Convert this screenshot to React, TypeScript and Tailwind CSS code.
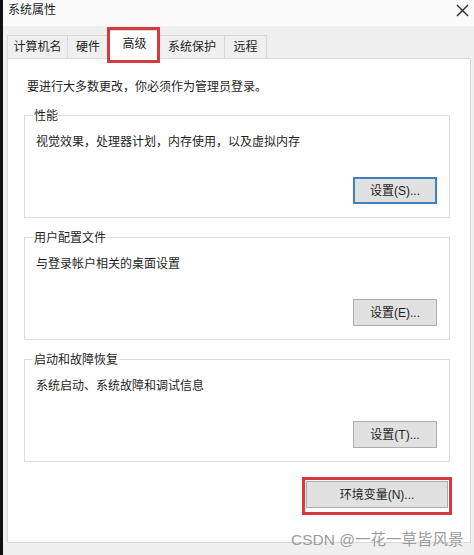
import React from 'react';

const tabs = [
  { label: '计算机名', w: 'w-[61px]' },
  { label: '硬件', w: 'w-[42px]' },
  { label: '高级', w: 'w-[51px]', active: true },
  { label: '系统保护', w: 'w-[66px]' },
  { label: '远程', w: 'w-[43px]' },
];

const groups = [
  { title: '性能', desc: '视觉效果，处理器计划，内存使用，以及虚拟内存', btn: '设置(S)...', primary: true },
  { title: '用户配置文件', desc: '与登录帐户相关的桌面设置', btn: '设置(E)...' },
  { title: '启动和故障恢复', desc: '系统启动、系统故障和调试信息', btn: '设置(T)...' },
];

const App: React.FC = () => {
  return (
    <div className="flex w-[474px] h-[555px] bg-[#f0f0f0] text-[12px] leading-[16px] text-[#1e1e1e] font-['Liberation_Sans','Noto_Sans_CJK_SC',sans-serif] overflow-hidden">
      {/* left dark edge */}
      <div className="w-[3px] shrink-0 bg-[#111]" />

      <div className="relative w-[471px] flex flex-col">
        {/* Title bar */}
        <div className="h-[26px] grid grid-cols-[1fr_22px] items-start bg-[#fbfbfb] pl-[5px] pt-[2px]">
          <span>系统属性</span>
          <svg width="22" height="20" viewBox="0 0 22 20" className="block">
            <path d="M5 3 L16 14 M16 3 L5 14" stroke="#2a2a2a" strokeWidth="1.4" fill="none" />
          </svg>
        </div>

        {/* Tabs */}
        <div className="h-[32px] flex items-end pl-[4px]">
          {tabs.map((t) =>
            t.active ? (
              <div
                key={t.label}
                className={`relative ${t.w} h-[29px] -mb-[1px] z-10 bg-white border border-b-0 border-[#d9d9d9] flex items-center justify-center pb-[2px]`}
              >
                {t.label}
                {/* red highlight */}
                <div className="absolute -left-[3px] -right-[1px] -top-[4px] -bottom-[4px] border-[3px] border-[#d43a40]" />
              </div>
            ) : (
              <div
                key={t.label}
                className={`${t.w} h-[23px] bg-[#f0f0f0] border border-b-0 border-[#d9d9d9] -ml-[1px] first:ml-0 flex items-center justify-center`}
              >
                {t.label}
              </div>
            )
          )}
        </div>

        {/* Panel */}
        <div className="ml-[4px] mr-[3px] h-[485px] bg-white border border-[#d9d9d9] pt-[20px] pl-[16px] pr-[20px]">
          <p className="pl-[3px]">要进行大多数更改，你必须作为管理员登录。</p>

          <div className="mt-[20px] flex flex-col gap-[19px]">
            {groups.map((g) => (
              <div key={g.title} className="h-[103px] border border-[#dcdcdc] flex flex-col pl-[11px] pr-[12px]">
                <span className="-mt-[8px] -ml-[3px] w-fit bg-white px-[1px] leading-[16px]">{g.title}</span>
                <p className="mt-[10px]">{g.desc}</p>
                <div className="mt-[27px] flex justify-end">
                  <button
                    className={`w-[84px] h-[27px] bg-[#e1e1e1] flex items-center justify-center ${
                      g.primary ? 'border-2 border-[#3d7fbf]' : 'border border-[#adadad]'
                    }`}
                  >
                    {g.btn}
                  </button>
                </div>
              </div>
            ))}
          </div>

          <div className="mt-[19px] flex justify-end pr-[2px]">
            <div className="relative">
              <button className="w-[142px] h-[27px] bg-[#e1e1e1] border border-[#adadad] flex items-center justify-center">
                环境变量(N)...
              </button>
              <div className="absolute -left-[4px] -right-[4px] -top-[4px] -bottom-[7px] border-[3px] border-[#d43a40]" />
            </div>
          </div>
        </div>

        {/* watermark */}
        <span className="absolute left-[288px] top-[530px] text-[15.5px] leading-[20px] text-[#9c9c9c] whitespace-nowrap">
          CSDN @一花一草皆风景
        </span>
      </div>
    </div>
  );
};

export default App;
